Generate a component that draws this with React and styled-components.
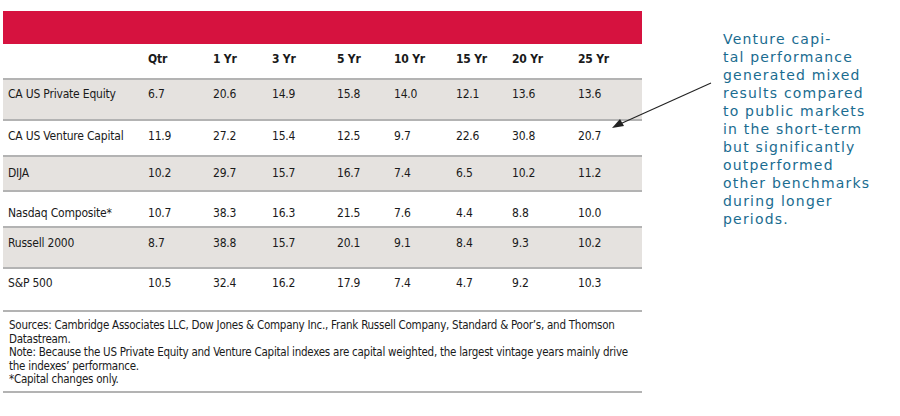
import React from "react";
import styled, { createGlobalStyle } from "styled-components";

const GlobalStyle = createGlobalStyle`
  body {
    margin: 0;
    background: #ffffff;
    font-family: "DejaVu Sans", sans-serif;
    font-stretch: condensed;
    color: #1a1a1a;
  }
`;

const Page = styled.div`
  position: relative;
  width: 900px;
  height: 416px;
  display: flex;
  padding: 11px 0 0 3px;
  box-sizing: border-box;
  overflow: hidden;
`;

const TableWrap = styled.div`
  width: 639px;
  flex: none;
  display: flex;
  flex-direction: column;
`;

const RedBar = styled.div`
  height: 33px;
  background: #d6123f;
`;

const cols = "145px 65px 59px 65px 57px 62px 56px 66px 64px";

const Row = styled.div`
  display: grid;
  grid-template-columns: ${cols};
  box-sizing: border-box;
  height: ${({ h }) => h}px;
  padding-top: ${({ pad }) => pad}px;
  background: ${({ shaded }) => (shaded ? "#e5e2df" : "#ffffff")};
  border-top: ${({ head }) => (head ? "none" : "2px solid #b3b3b3")};
  font-size: 12px;
  line-height: 14px;
  letter-spacing: -0.2px;
  font-weight: ${({ head }) => (head ? 700 : 400)};
`;

const Cell = styled.div`
  white-space: nowrap;
  padding-left: ${({ first }) => (first ? "5px" : "0")};
`;

const Footer = styled.div`
  margin-top: 1px;
  border-top: 2px solid #b3b3b3;
  border-bottom: 2px solid #b3b3b3;
  padding: 7px 0 5px 6px;
  font-size: 11.5px;
  line-height: 13.6px;
  letter-spacing: -0.25px;
  height: 83px;
  box-sizing: border-box;
`;

const Note = styled.aside`
  margin: 19px 0 0 81px;
  width: 178px;
  flex: none;
  color: #1a6c90;
  font-family: "DejaVu Sans", sans-serif;
  font-stretch: normal;
  font-size: 14px;
  line-height: 18px;
  letter-spacing: 1.2px;
`;

const Line = styled.div`
  white-space: nowrap;
`;

const Arrow = styled.svg`
  position: absolute;
  left: 600px;
  top: 70px;
`;

const headers = ["", "Qtr", "1 Yr", "3 Yr", "5 Yr", "10 Yr", "15 Yr", "20 Yr", "25 Yr"];

const rows = [
  { name: "CA US Private Equity", v: ["6.7", "20.6", "14.9", "15.8", "14.0", "12.1", "13.6", "13.6"], h: 41, pad: 7, shaded: true },
  { name: "CA US Venture Capital", v: ["11.9", "27.2", "15.4", "12.5", "9.7", "22.6", "30.8", "20.7"], h: 36, pad: 8 },
  { name: "DIJA", v: ["10.2", "29.7", "15.7", "16.7", "7.4", "6.5", "10.2", "11.2"], h: 35, pad: 9, shaded: true },
  { name: "Nasdaq Composite*", v: ["10.7", "38.3", "16.3", "21.5", "7.6", "4.4", "8.8", "10.0"], h: 36, pad: 14 },
  { name: "Russell 2000", v: ["8.7", "38.8", "15.7", "20.1", "9.1", "8.4", "9.3", "10.2"], h: 41, pad: 8, shaded: true },
  { name: "S&P 500", v: ["10.5", "32.4", "16.2", "17.9", "7.4", "4.7", "9.2", "10.3"], h: 42, pad: 7 },
];

const noteLines = [
  "Venture capi-",
  "tal performance",
  "generated mixed",
  "results compared",
  "to public markets",
  "in the short-term",
  "but significantly",
  "outperformed",
  "other benchmarks",
  "during longer",
  "periods.",
];

export default function App() {
  return (
    <>
      <GlobalStyle />
      <Page>
        <TableWrap>
          <RedBar />
          <Row head h={34} pad={8}>
            {headers.map((t, i) => (
              <Cell key={i} first={i === 0}>{t}</Cell>
            ))}
          </Row>
          {rows.map((r) => (
            <Row key={r.name} h={r.h} pad={r.pad} shaded={r.shaded}>
              <Cell first>{r.name}</Cell>
              {r.v.map((x, i) => (
                <Cell key={i}>{x}</Cell>
              ))}
            </Row>
          ))}
          <Footer>
            <div>
              Sources: Cambridge Associates LLC, Dow Jones &amp; Company Inc., Frank Russell Company, Standard &amp; Poor’s, and Thomson
              Datastream.
            </div>
            <div>
              Note: Because the US Private Equity and Venture Capital indexes are capital weighted, the largest vintage years mainly drive
              the indexes’ performance.
            </div>
            <div>*Capital changes only.</div>
          </Footer>
        </TableWrap>
        <Note>
          {noteLines.map((l) => (
            <Line key={l}>{l}</Line>
          ))}
        </Note>
        <Arrow width="120" height="70" viewBox="0 0 120 70">
          <line x1="111" y1="13" x2="20" y2="54" stroke="#222" strokeWidth="1.1" />
          <polygon points="12,58 20,49 24,56" fill="#222" />
        </Arrow>
      </Page>
    </>
  );
}
